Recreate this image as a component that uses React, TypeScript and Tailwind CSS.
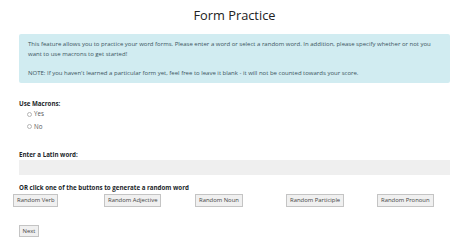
const botones = [
  "Random Verb",
  "Random Adjective",
  "Random Noun",
  "Random Participle",
  "Random Pronoun",
];

function Radio({ label, className }: { label: string; className?: string }) {
  return (
    <div className={"flex items-center gap-[2px] pl-[8px] " + (className || "")}>
      <span className="h-[5px] w-[5px] rounded-full border border-[#b5b5b5] bg-white"></span>
      <span className="text-[6.2px] leading-[9.6px] text-[#555]">{label}</span>
    </div>
  );
}

export default function App() {
  return (
    <div className="min-h-screen bg-white pl-[19px] pr-[24px] font-['Open_Sans','Noto_Sans',sans-serif] text-[#212529]">
      <h1 className="pt-[7px] text-center text-[12.8px] font-medium leading-[16px] text-[#222]">
        Form Practice
      </h1>

      <section className="mt-[11px] rounded-[2px] bg-[#d1ecf1] pb-[5px] pl-[9px] pr-[14px] pt-[6px] text-[6px] leading-[9.6px] text-[#3b5560]">
        This feature allows you to practice your word forms. Please enter a word or select a random word. In addition, please specify whether or not you
        want to use macrons to get started!
        <br />
        <br />
        NOTE: If you haven't learned a particular form yet, feel free to leave it blank - it will not be counted towards your score.
      </section>

      <div className="mt-[16px]">
        <p className="text-[6.2px] font-bold leading-[9.6px]">Use Macrons:</p>
        <Radio label="Yes" className="mt-[0.5px]" />
        <Radio label="No" className="mt-[3px]" />
      </div>

      <div className="mt-[18px]">
        <p className="text-[6.2px] font-bold leading-[9.6px]">Enter a Latin word:</p>
        <div className="mt-[0.5px] h-[15px] w-full bg-[#efefef]"></div>
      </div>

      <div className="mt-[8px]">
        <p className="text-[6.2px] font-bold leading-[9.6px]">
          OR click one of the buttons to generate a random word
        </p>
        <div className="-ml-[6px] mt-[1.5px] grid grid-cols-[repeat(5,91px)]">
          {botones.map((b) => (
            <div key={b} className="flex">
              <button className="h-[13px] border border-[#c4c4c4] bg-[#f0f0f0] px-[3px] text-[5.9px] leading-[11px] text-[#444]">
                {b}
              </button>
            </div>
          ))}
        </div>
      </div>

      <div className="mt-[18px] flex">
        <button className="h-[12px] w-[20px] border border-[#c4c4c4] bg-[#f0f0f0] text-[5.9px] leading-[10px] text-[#444]">
          Next
        </button>
      </div>
    </div>
  );
}
